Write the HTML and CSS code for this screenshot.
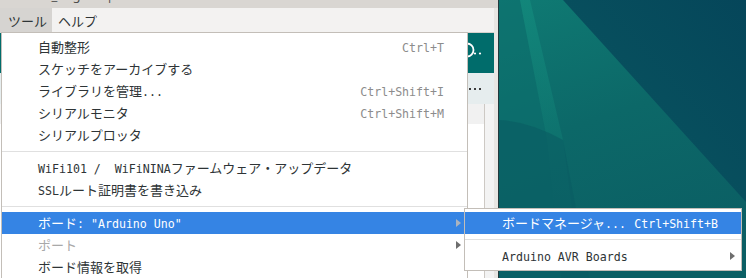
FILE: index.html
```html
<!DOCTYPE html>
<html lang="ja">
<head>
<meta charset="utf-8">
<title>Arduino IDE ツール menu</title>
<link rel="stylesheet" href="styles.css">
</head>
<body>
<div class="screen">
  <div class="window">
    <div class="titlebar"><span class="title">sketch_aug19a | Arduino 1.8.13</span></div>
    <div class="win-body">
      <div class="menubar">
        <div class="mb-item active">ツール</div>
        <div class="mb-item">ヘルプ</div>
      </div>
      <div class="toolbar">
        <svg class="tb-icon" width="28" height="40" viewBox="0 0 28 40">
          <circle cx="1" cy="17" r="6.5" fill="none" stroke="#ffffff" stroke-width="1.8"/>
          <circle cx="9" cy="20.5" r="1.1" fill="#ffffff"/>
          <circle cx="14" cy="20.5" r="1.1" fill="#ffffff"/>
        </svg>
      </div>
      <div class="tabbar"><span class="dot"></span><span class="dot"></span><span class="dot"></span></div>
      <div class="editor">
        <div class="code"><div class="code-top"></div></div>
        <div class="scroll"></div>
      </div>
    </div>
  </div>
  <div class="desktop">
    <svg viewBox="0 0 247 278" preserveAspectRatio="none">
      <defs>
        <linearGradient id="base" x1="1" y1="0" x2="0" y2="1">
          <stop offset="0" stop-color="#05465a"/>
          <stop offset="1" stop-color="#0b5d63"/>
        </linearGradient>
        <linearGradient id="left" x1="0" y1="0" x2="0.3" y2="1">
          <stop offset="0" stop-color="#0f7a73"/>
          <stop offset="0.5" stop-color="#0c6868"/>
          <stop offset="1" stop-color="#0b5f64"/>
        </linearGradient>
        <linearGradient id="ray" x1="0" y1="0" x2="0" y2="1">
          <stop offset="0" stop-color="#13897c" stop-opacity="1"/>
          <stop offset="1" stop-color="#0f7a72" stop-opacity="0"/>
        </linearGradient>
      </defs>
      <rect width="247" height="278" fill="url(#base)"/>
      <polygon points="0,0 64,0 247,202 247,278 0,278" fill="url(#left)"/>
      <polygon points="0,0 21,0 48,140 62,278 0,278" fill="#0d6f6d" opacity="0.55"/>
      <polygon points="21,0 31,0 64,140 82,278 62,278 48,140" fill="url(#ray)" opacity="0.8"/>
      <path d="M0,120 Q30,121 64,140 L90,278 L0,278 Z" fill="#0a5c62" opacity="0.6"/>
    </svg>
  </div>

  <div class="menu">
    <div class="mi"><span class="lbl">自動整形</span><span class="acc">Ctrl+T</span><span class="arr"></span></div>
    <div class="mi"><span class="lbl">スケッチをアーカイブする</span><span class="arr"></span></div>
    <div class="mi"><span class="lbl">ライブラリを管理<span class="lat">...</span></span><span class="acc">Ctrl+Shift+I</span><span class="arr"></span></div>
    <div class="mi"><span class="lbl">シリアルモニタ</span><span class="acc">Ctrl+Shift+M</span><span class="arr"></span></div>
    <div class="mi"><span class="lbl">シリアルプロッタ</span><span class="arr"></span></div>
    <div class="sep"></div>
    <div class="mi"><span class="lbl"><span class="lat">WiFi101 /  WiFiNINA</span>ファームウェア・アップデータ</span><span class="arr"></span></div>
    <div class="mi"><span class="lbl"><span class="lat">SSL</span>ルート証明書を書き込み</span><span class="arr"></span></div>
    <div class="sep"></div>
    <div class="mi hl"><span class="lbl">ボード<span class="lat">: "Arduino Uno"</span></span><span class="arr sub"></span></div>
    <div class="mi dis"><span class="lbl">ポート</span><span class="arr sub"></span></div>
    <div class="mi"><span class="lbl">ボード情報を取得</span><span class="arr"></span></div>
  </div>

  <div class="submenu">
    <div class="mi hl"><span class="lbl">ボードマネージャ<span class="lat">...</span></span><span class="acc">Ctrl+Shift+B</span><span class="arr"></span></div>
    <div class="sep"></div>
    <div class="mi"><span class="lbl"><span class="lat">Arduino AVR Boards</span></span><span class="arr sub"></span></div>
  </div>
</div>
</body>
</html>
```

FILE: styles.css
```css
* {
  box-sizing: border-box;
  margin: 0;
  padding: 0;
}

html,
body {
  width: 746px;
  height: 278px;
  overflow: hidden;
  background: #0a5a62;
}

.screen {
  position: relative;
  display: flex;
  width: 746px;
  height: 278px;
  overflow: hidden;
}

/* ---------- window behind the menu ---------- */
.window {
  width: 499px;
  flex: none;
  display: flex;
  flex-direction: column;
  border-right: 1px solid #23393d;
}

.titlebar {
  height: 8px;
  flex: none;
  background: #d9d6d2;
  overflow: hidden;
}

.title {
  display: block;
  margin-top: -11.5px;
  padding-left: 12px;
  font: 13px/13px "Noto Sans", sans-serif;
  color: #4d4d4d;
  white-space: nowrap;
}

.win-body {
  flex: 1;
  min-height: 0;
  display: flex;
  flex-direction: column;
  border-right: 4px solid #e8e6e3;
}

.menubar {
  height: 25px;
  flex: none;
  display: flex;
  background: #f3f2f1;
  border-bottom: 1px solid #d6d2cd;
  font-family: "Noto Sans CJK JP", sans-serif;
  font-size: 13px;
  color: #2e3436;
}

.mb-item {
  display: flex;
  align-items: center;
  padding: 0 6px;
  white-space: nowrap;
}

.mb-item.active {
  width: 52px;
  padding: 0 0 0 8px;
  background: #d6d4d1;
}

.toolbar {
  height: 40px;
  flex: none;
  display: flex;
  justify-content: flex-end;
  background: #006c6b;
}

.tb-icon {
  display: block;
}

.tabbar {
  height: 31px;
  flex: none;
  display: flex;
  justify-content: flex-end;
  align-items: center;
  gap: 3px;
  padding-right: 13px;
  background: #e6edee;
}

.dot {
  width: 2px;
  height: 2px;
  background: #3c3c3c;
}

.editor {
  flex: 1;
  display: flex;
}

.code {
  flex: 1;
  background: #ffffff;
}

.code-top {
  height: 20px;
  background: #f1f1f1;
}

.scroll {
  width: 10px;
  background: #f3f3f3;
  border-left: 1px solid #cdc9c4;
}

.desktop {
  flex: 1;
}

.desktop svg {
  display: block;
  width: 100%;
  height: 100%;
}

/* ---------- menus ---------- */
.menu,
.submenu {
  position: absolute;
  background: #ffffff;
  border: 1px solid #c3beb8;
  padding: 3px 0;
  font-family: "Noto Sans CJK JP", sans-serif;
  font-size: 13px;
  color: #2e3436;
}

.menu {
  left: 1px;
  top: 32px;
  width: 467px;
}

.submenu {
  left: 464px;
  top: 208px;
  width: 278px;
}

.mi {
  display: flex;
  align-items: baseline;
  height: 22px;
  line-height: 22px;
  padding-left: 36px;
  white-space: pre;
}

.submenu .mi {
  padding-left: 37px;
}

.lbl {
  flex: 1;
}

.lat,
.acc {
  font-family: "DejaVu Sans Mono", monospace;
  font-size: 11.6px;
}

.acc {
  color: #8c8c8c;
}

.arr {
  width: 23px;
  flex: none;
  align-self: stretch;
  display: flex;
  align-items: center;
}

.arr.sub::before {
  content: "";
  margin-left: 12px;
  border-left: 5px solid #6e6e6e;
  border-top: 4px solid transparent;
  border-bottom: 4px solid transparent;
}

.mi.hl {
  background: #3584e4;
  color: #ffffff;
}

.mi.hl .acc {
  color: #ffffff;
}

.mi.hl .arr.sub::before {
  border-left-color: #aab3bf;
}

.mi.dis {
  color: #a9a9a9;
}

.sep {
  height: 11px;
  display: flex;
  align-items: center;
}

.sep::before {
  content: "";
  flex: 1;
  height: 1px;
  background: #e0e0e0;
}
```
